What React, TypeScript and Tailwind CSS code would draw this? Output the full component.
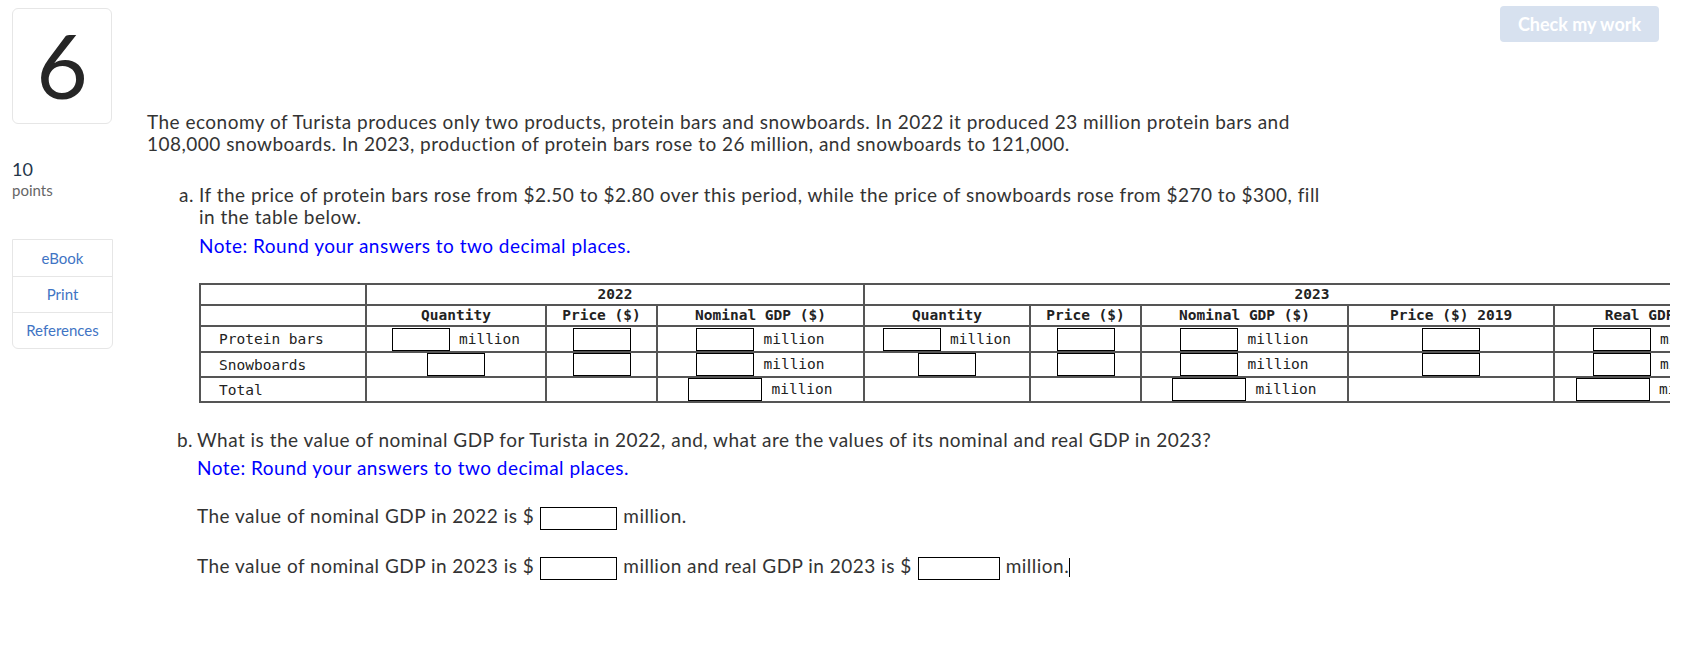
import React from "react";

function Box({ wide = false }: { wide?: boolean }) {
  return (
    <span
      className={
        "inline-block h-[23px] shrink-0 border border-black bg-white " +
        (wide ? "w-[74px]" : "w-[58px]")
      }
    />
  );
}

function InCell({
  million = false,
  wide = false,
  shift = false,
}: {
  million?: boolean;
  wide?: boolean;
  shift?: boolean;
}) {
  return (
    <div className={"flex items-center justify-center gap-[9px] " + (shift ? "pr-[18px]" : "")}>
      <Box wide={wide} />
      {million && <span className="leading-[23px]">million</span>}
    </div>
  );
}

const cell = "border-2 border-[#555] p-0 align-middle";
const head = cell + " font-bold text-center leading-[17px]";
const label = cell + " pl-[18px] text-left";

function LineBox({ w }: { w: string }) {
  return <span className={"inline-block h-[23px] mt-[2px] shrink-0 border border-black bg-white " + w} />;
}

export default function App() {
  return (
    <div className="flex h-[672px] w-[1702px] overflow-hidden bg-white font-['Lato',sans-serif] text-[#333]">
      {/* Sidebar */}
      <aside className="w-[147px] shrink-0 pl-[12px] pt-[8px]">
        <div className="flex h-[116px] w-[100px] items-center justify-center rounded-[6px] border border-[#e6e6e6]">
          <span className="text-[89px] leading-none text-[#262626] -mt-[4px]">6</span>
        </div>
        <div className="mt-[34px] text-[18px] leading-[22px] text-[#24364a]">10</div>
        <div className="text-[15px] leading-[20px] text-[#666]">points</div>
        <div className="mt-[39px] w-[101px] overflow-hidden rounded-b-[6px] border border-[#e6e6e6] text-[15px] text-[#3f74c4]">
          <div className="flex h-[37px] items-center justify-center border-b border-[#e6e6e6]">eBook</div>
          <div className="flex h-[36px] items-center justify-center border-b border-[#e6e6e6]">Print</div>
          <div className="flex h-[35px] items-center justify-center">References</div>
        </div>
      </aside>

      {/* Main */}
      <main className="min-w-0 flex-1">
        <div className="flex justify-end pr-[43px] pt-[6px]">
          <button className="h-[36px] w-[159px] rounded-[4px] bg-[#d7e1ef] text-[18px] font-bold text-white">
            Check my work
          </button>
        </div>

        <div className="pr-[32px] text-[19px] leading-[22px] tracking-[0.48px]">
          <p className="mt-[69px]">
            The economy of Turista produces only two products, protein bars and snowboards. In 2022 it produced 23 million protein bars and
            <br />
            108,000 snowboards. In 2023, production of protein bars rose to 26 million, and snowboards to 121,000.
          </p>

          <div className="mt-[29px] flex pl-[32px]">
            <span className="w-[20px] shrink-0">a.</span>
            <div className="flex-1">
              <p>
                If the price of protein bars rose from $2.50 to $2.80 over this period, while the price of snowboards rose from $270 to $300, fill
                <br />
                in the table below.
              </p>
              <p className="mt-[7px] text-[#0000ff]">Note: Round your answers to two decimal places.</p>
            </div>
          </div>

          <div className="ml-[52px] mt-[26px] overflow-hidden tracking-normal">
            <table className="w-[1560px] table-fixed border-collapse font-['DejaVu_Sans_Mono',monospace] text-[14.5px] text-[#222]">
              <colgroup>
                <col className="w-[166px]" />
                <col className="w-[180px]" />
                <col className="w-[111px]" />
                <col className="w-[207px]" />
                <col className="w-[166px]" />
                <col className="w-[111px]" />
                <col className="w-[207px]" />
                <col className="w-[206px]" />
                <col className="w-[206px]" />
              </colgroup>
              <tbody>
                <tr className="h-[21px]">
                  <td className={cell}></td>
                  <td colSpan={3} className={head}>2022</td>
                  <td colSpan={5} className={head}>2023</td>
                </tr>
                <tr className="h-[21px]">
                  <td className={cell}></td>
                  <td className={head}>Quantity</td>
                  <td className={head}>Price ($)</td>
                  <td className={head}>Nominal GDP ($)</td>
                  <td className={head}>Quantity</td>
                  <td className={head}>Price ($)</td>
                  <td className={head}>Nominal GDP ($)</td>
                  <td className={head}>Price ($) 2019</td>
                  <td className={head}>Real GDP ($)</td>
                </tr>
                <tr className="h-[26px]">
                  <td className={label}>Protein bars</td>
                  <td className={cell}><InCell million /></td>
                  <td className={cell}><InCell /></td>
                  <td className={cell}><InCell million /></td>
                  <td className={cell}><InCell million /></td>
                  <td className={cell}><InCell /></td>
                  <td className={cell}><InCell million /></td>
                  <td className={cell}><InCell /></td>
                  <td className={cell}><InCell million /></td>
                </tr>
                <tr className="h-[25px]">
                  <td className={label}>Snowboards</td>
                  <td className={cell}><InCell /></td>
                  <td className={cell}><InCell /></td>
                  <td className={cell}><InCell million /></td>
                  <td className={cell}><InCell /></td>
                  <td className={cell}><InCell /></td>
                  <td className={cell}><InCell million /></td>
                  <td className={cell}><InCell /></td>
                  <td className={cell}><InCell million /></td>
                </tr>
                <tr className="h-[25px]">
                  <td className={label}>Total</td>
                  <td className={cell}></td>
                  <td className={cell}></td>
                  <td className={cell}><InCell million wide /></td>
                  <td className={cell}></td>
                  <td className={cell}></td>
                  <td className={cell}><InCell million wide /></td>
                  <td className={cell}></td>
                  <td className={cell}><InCell million wide shift /></td>
                </tr>
              </tbody>
            </table>
          </div>

          <div className="mt-[26px] flex pl-[30px]">
            <span className="w-[20px] shrink-0">b.</span>
            <div className="flex-1">
              <p>What is the value of nominal GDP for Turista in 2022, and, what are the values of its nominal and real GDP in 2023?</p>
              <p className="mt-[6px] text-[#0000ff]">Note: Round your answers to two decimal places.</p>
              <div className="mt-[26px] flex items-start gap-[6px]">
                <span>The value of nominal GDP in 2022 is $</span>
                <LineBox w="w-[77px]" />
                <span>million.</span>
              </div>
              <div className="mt-[25px] flex items-start gap-[6px]">
                <span>The value of nominal GDP in 2023 is $</span>
                <LineBox w="w-[77px]" />
                <span>million and real GDP in 2023 is $</span>
                <LineBox w="w-[82px]" />
                <span className="flex items-start">
                  million.
                  <span className="mt-[3px] inline-block h-[19px] w-px bg-black" />
                </span>
              </div>
            </div>
          </div>
        </div>
      </main>
    </div>
  );
}
